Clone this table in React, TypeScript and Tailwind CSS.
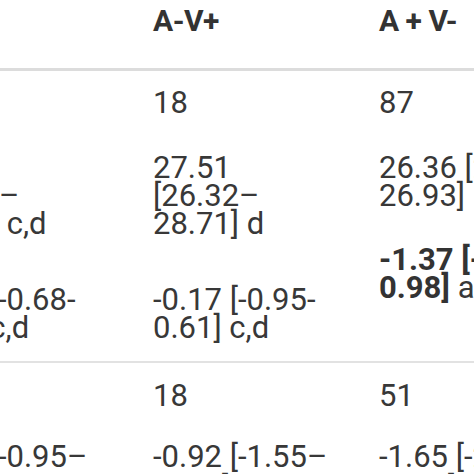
import React from "react";

export default function App() {
  return (
    <div className="w-[474px] h-[474px] overflow-hidden bg-white text-[#383838] font-['Roboto',sans-serif]">
      <div className="ml-[-87px] w-[723px]">
        {/* header */}
        <div className="grid grid-cols-[240px_226px_257px] pt-[7px] pb-[33px] border-b-[3px] border-[#dcdcdc] text-[30px] leading-[28px] font-bold tracking-[-0.5px] text-[#333333]">
          <div>A-V-</div>
          <div>A-V+</div>
          <div>A + V-</div>
        </div>
        {/* row 1 */}
        <div className="grid grid-cols-[240px_226px_257px] pt-[18px] text-[31px] leading-[28px]">
          <div>62</div>
          <div>18</div>
          <div>87</div>
        </div>
        {/* rows 2-3 */}
        <div className="grid grid-cols-[240px_226px_257px] pt-[37px] pb-[19px] border-b-2 border-[#e2e2e2] text-[31px] leading-[28px]">
          <div className="flex flex-col gap-[48px] w-[182px]">
            <div>27.84 [26.91–28.77] c,d</div>
            <div>-0.25 [-0.68-0.18] c,d</div>
          </div>
          <div className="flex flex-col gap-[48px] w-[182px]">
            <div>27.51 [26.32–28.71] d</div>
            <div>-0.17 [-0.95-0.61] c,d</div>
          </div>
          <div className="flex flex-col gap-[36px] w-[230px]">
            <div>26.36 [25.79–26.93]</div>
            <div>
              <span className="font-bold text-[#333333]">-1.37 [-1.76–0.98]</span> a
            </div>
          </div>
        </div>
        {/* row 4 */}
        <div className="grid grid-cols-[240px_226px_257px] pt-[19px] text-[31px] leading-[28px]">
          <div>62</div>
          <div>18</div>
          <div>51</div>
        </div>
        {/* row 5 */}
        <div className="grid grid-cols-[240px_226px_257px] pt-[31px] text-[31px] leading-[31px]">
          <div className="w-[182px]">-1.41 [-0.95–<wbr />-0.28]</div>
          <div className="w-[182px]">-0.92 [-1.55–<wbr />-0.29]</div>
          <div className="w-[230px]">-1.65 [-2.11–<wbr />-1.19]</div>
        </div>
      </div>
    </div>
  );
}
